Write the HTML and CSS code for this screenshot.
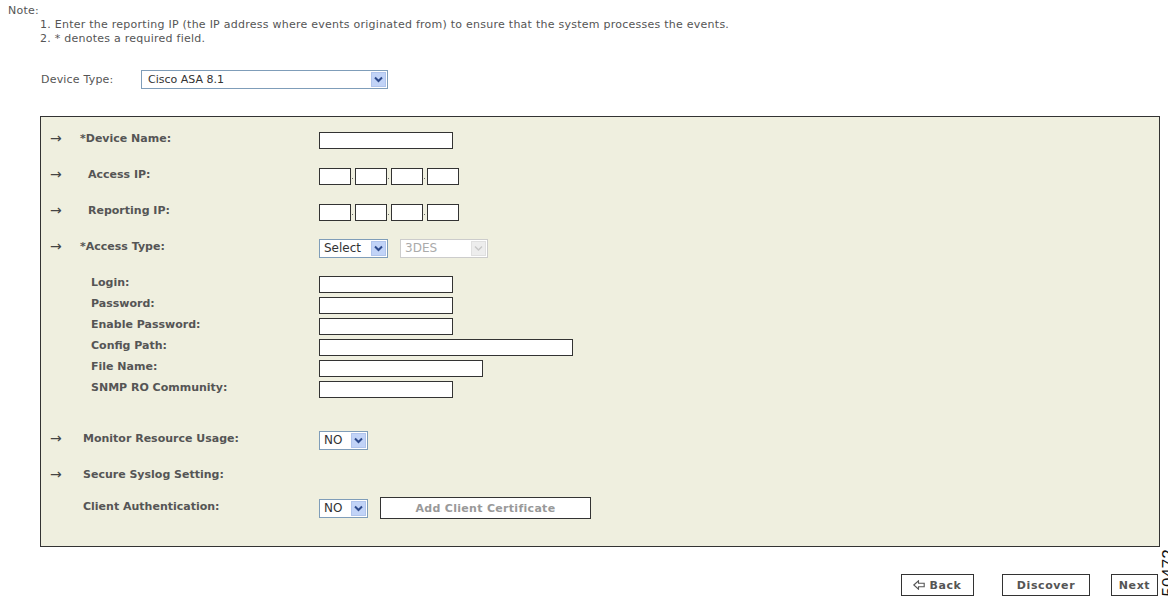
FILE: index.html
```
<!DOCTYPE html>
<html>
  <head>
    <title>Add Device</title>
    <link rel="stylesheet" href="styles.css">
  </head>
  <body>
    <div class="note">
      <div>Note:</div>
      <div class="note-item">1. Enter the reporting IP (the IP address where events originated from) to ensure that the system processes the events.</div>
      <div class="note-item">2. * denotes a required field.</div>
    </div>

    <div class="device-type">
      <span class="dt-label">Device Type:</span>
      <div class="select dt-select"><span class="sel-text">Cisco ASA 8.1</span><span class="arrow"><svg width="9" height="7" viewBox="0 0 9 7"><path d="M1 1.5 L4.5 5 L8 1.5" fill="none" stroke="#2d4a8c" stroke-width="2"/></svg></span></div>
    </div>

    <div class="panel">
      <div class="row big">
        <span class="arr">&rarr;</span>
        <span class="lbl">*Device Name:</span>
        <span class="fld"><span class="box w134"></span></span>
      </div>
      <div class="row big">
        <span class="arr">&rarr;</span>
        <span class="lbl ind">Access IP:</span>
        <span class="fld ip"><span class="box ipb"></span><span class="dot"></span><span class="box ipb"></span><span class="dot"></span><span class="box ipb"></span><span class="dot"></span><span class="box ipb"></span></span>
      </div>
      <div class="row big">
        <span class="arr">&rarr;</span>
        <span class="lbl ind">Reporting IP:</span>
        <span class="fld ip"><span class="box ipb"></span><span class="dot"></span><span class="box ipb"></span><span class="dot"></span><span class="box ipb"></span><span class="dot"></span><span class="box ipb"></span></span>
      </div>
      <div class="row big">
        <span class="arr">&rarr;</span>
        <span class="lbl">*Access Type:</span>
        <span class="fld">
          <div class="select sel-type"><span class="sel-text">Select</span><span class="arrow"><svg width="9" height="7" viewBox="0 0 9 7"><path d="M1 1.5 L4.5 5 L8 1.5" fill="none" stroke="#2d4a8c" stroke-width="2"/></svg></span></div>
          <div class="select sel-des off"><span class="sel-text">3DES</span><span class="arrow"><svg width="9" height="7" viewBox="0 0 9 7"><path d="M1 1.5 L4.5 5 L8 1.5" fill="none" stroke="#c8c8c8" stroke-width="1.5"/></svg></span></div>
        </span>
      </div>

      <div class="sub">
        <div class="row small"><span class="arr"></span><span class="lbl sl">Login:</span><span class="fld"><span class="box w134"></span></span></div>
        <div class="row small"><span class="arr"></span><span class="lbl sl">Password:</span><span class="fld"><span class="box w134"></span></span></div>
        <div class="row small"><span class="arr"></span><span class="lbl sl">Enable Password:</span><span class="fld"><span class="box w134"></span></span></div>
        <div class="row small"><span class="arr"></span><span class="lbl sl">Config Path:</span><span class="fld"><span class="box w254"></span></span></div>
        <div class="row small"><span class="arr"></span><span class="lbl sl">File Name:</span><span class="fld"><span class="box w164"></span></span></div>
        <div class="row small"><span class="arr"></span><span class="lbl sl">SNMP RO Community:</span><span class="fld"><span class="box w134"></span></span></div>
      </div>

      <div class="lower">
        <div class="row big">
          <span class="arr">&rarr;</span>
          <span class="lbl ml">Monitor Resource Usage:</span>
          <span class="fld"><div class="select sel-no"><span class="sel-text">NO</span><span class="arrow"><svg width="9" height="7" viewBox="0 0 9 7"><path d="M1 1.5 L4.5 5 L8 1.5" fill="none" stroke="#2d4a8c" stroke-width="2"/></svg></span></div></span>
        </div>
        <div class="row big">
          <span class="arr">&rarr;</span>
          <span class="lbl ml">Secure Syslog Setting:</span>
          <span class="fld"></span>
        </div>
        <div class="row client">
          <span class="arr"></span>
          <span class="lbl ml">Client Authentication:</span>
          <span class="fld">
            <div class="select sel-no"><span class="sel-text">NO</span><span class="arrow"><svg width="9" height="7" viewBox="0 0 9 7"><path d="M1 1.5 L4.5 5 L8 1.5" fill="none" stroke="#2d4a8c" stroke-width="2"/></svg></span></div>
            <span class="btn cert">Add Client Certificate</span>
          </span>
        </div>
      </div>
    </div>

    <div class="actions">
      <span class="btn back"><svg class="back-ico" width="12" height="10" viewBox="0 0 12 10"><path d="M0.8 5 L5.5 0.8 V3.2 H11.2 V6.8 H5.5 V9.2 Z" fill="none" stroke="#555" stroke-width="1.1" stroke-linejoin="miter"/></svg>Back</span>
      <span class="btn disc">Discover</span>
      <span class="btn next">Next</span>
    </div>

    <div class="fig-id">250472</div>
  </body>
</html>
```

FILE: styles.css
```
html {
  overflow: hidden;
}
body {
  margin: 4px 8px 0 8px;
  font-family: "DejaVu Sans", Verdana, sans-serif;
  font-size: 11px;
  color: #555;
  background: #fff;
  position: relative;
}
.note {
  line-height: 14px;
  letter-spacing: 0.25px;
}
.note-item {
  padding-left: 32px;
}
.device-type {
  display: flex;
  align-items: center;
  margin-top: 24px;
  padding-left: 33px;
}
.dt-label {
  width: 100px;
  font-size: 11px;
  letter-spacing: 0.2px;
  color: #555;
}
.select {
  display: flex;
  align-items: center;
  justify-content: space-between;
  box-sizing: border-box;
  height: 19px;
  border: 1px solid #7f9db9;
  background: #fff;
  padding: 1px;
}
.sel-text {
  font-size: 12px;
  color: #333;
  padding-left: 3px;
}
.arrow {
  width: 15px;
  height: 15px;
  background: #c1d3f7;
  border: 1px solid #b0c4ec;
  box-sizing: border-box;
  display: flex;
  align-items: center;
  justify-content: center;
}
.dt-select {
  width: 247px;
}
.dt-select .sel-text {
  padding-left: 5px;
  font-size: 11px;
}
.panel {
  margin: 27px 0 0 32px;
  width: 1120px;
  height: 431px;
  box-sizing: border-box;
  border: 1px solid #333;
  background: #efefdf;
  padding: 5px 0 0 9px;
}
.row {
  display: flex;
  align-items: center;
}
.row.big {
  height: 36px;
}
.row.small {
  height: 21px;
}
.row.client {
  height: 28px;
}
.arr {
  width: 30px;
  font-size: 14px;
  color: #444;
  padding-bottom: 4px;
}
.lbl {
  width: 239px;
  font-weight: bold;
  font-size: 11px;
  color: #555;
  padding-bottom: 4px;
}
.lbl.ind {
  padding-left: 8px;
  width: 231px;
}
.lbl.sl {
  padding-left: 11px;
  width: 228px;
}
.lbl.ml {
  padding-left: 3px;
  width: 236px;
}
.sub {
  margin-top: 8px;
}
.lower {
  margin-top: 22px;
}
.fld {
  display: flex;
  align-items: center;
}
.box {
  display: inline-block;
  box-sizing: border-box;
  height: 17px;
  border: 1px solid #333;
  background: #fff;
}
.w134 { width: 134px; }
.w164 { width: 164px; }
.w254 { width: 254px; }
.ipb { width: 32px; }
.dot {
  width: 4px;
  height: 17px;
  position: relative;
}
.dot::after {
  content: "";
  position: absolute;
  left: 1px;
  top: 10px;
  width: 1px;
  height: 1px;
  background: #666;
}
.sel-type {
  width: 69px;
}
.sel-des {
  width: 88px;
  margin-left: 12px;
}
.sel-des.off {
  border-color: #ccc;
}
.sel-des .sel-text {
  color: #aaa;
}
.sel-des .arrow {
  background: #ededed;
  border-color: #e0e0e0;
}
.sel-no {
  width: 49px;
}
.btn {
  display: inline-flex;
  align-items: center;
  justify-content: center;
  box-sizing: border-box;
  height: 22px;
  border: 1px solid #333;
  background: #fff;
  font-weight: bold;
  font-size: 11px;
  color: #555;
  letter-spacing: 0.6px;
}
.back-ico {
  margin-right: 4px;
}
.cert {
  width: 211px;
  margin-left: 12px;
  color: #999;
  letter-spacing: 0.3px;
}
.actions {
  display: flex;
  justify-content: flex-end;
  margin: 27px 10px 0 0;
}
.back {
  width: 73px;
}
.disc {
  width: 88px;
  margin-left: 28px;
}
.next {
  width: 47px;
  margin-left: 21px;
}
.fig-id {
  position: absolute;
  left: 1153px;
  top: 602px;
  height: 15px;
  line-height: 15px;
  white-space: nowrap;
  transform-origin: left top;
  transform: rotate(-90deg);
  font-family: "Liberation Sans", Arial, sans-serif;
  font-size: 17px;
  color: #111;
}
```
